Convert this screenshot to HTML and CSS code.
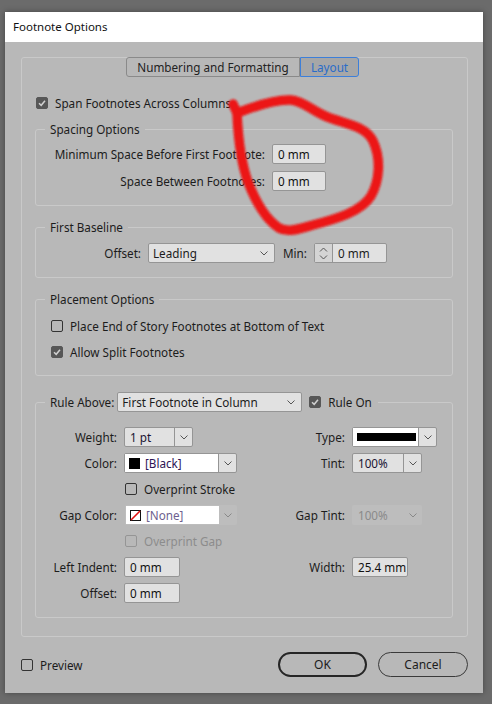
FILE: index.html
```html
<!DOCTYPE html>
<html lang="en">
<head>
    <meta charset="UTF-8">
    <meta name="viewport" content="width=device-width, initial-scale=1.0">
    <title>Footnote Options</title>
    <link rel="stylesheet" href="styles.css">
</head>
<body>
    <div class="dialog">
        <div class="titlebar">Footnote Options</div>

        <div class="panel">
            <div class="tabs">
                <div class="tab">Numbering and Formatting</div>
                <div class="tab active">Layout</div>
            </div>

            <div class="check-row span-row">
                <span class="cb checked"><svg width="10" height="10" viewBox="0 0 10 10"><path d="M2 5.2 L4.2 7.3 L8 2.8" fill="none" stroke="#d0d0d0" stroke-width="1.5"/></svg></span>
                <span>Span Footnotes Across Columns</span>
            </div>

            <fieldset class="group">
                <legend>Spacing Options</legend>
                <div class="spacing-grid">
                    <span class="lbl">Minimum Space Before First Footnote:</span>
                    <span class="field">0 mm</span>
                    <span class="lbl">Space Between Footnotes:</span>
                    <span class="field">0 mm</span>
                </div>
            </fieldset>

            <fieldset class="group gap-top">
                <legend>First Baseline</legend>
                <div class="baseline-row">
                    <span class="lbl offset-lbl">Offset:</span>
                    <span class="select leading">
                        <span class="select-value">Leading</span>
                        <svg class="chev" width="8" height="5" viewBox="0 0 8 5"><path d="M0.5 0.5 L4 4 L7.5 0.5" fill="none" stroke="#555" stroke-width="1"/></svg>
                    </span>
                    <span class="lbl">Min:</span>
                    <span class="spinner">
                        <span class="spin-btns">
                            <svg width="9" height="15" viewBox="0 0 9 15"><path d="M1 5.5 L4.5 2 L8 5.5 M1 9.5 L4.5 13 L8 9.5" fill="none" stroke="#555" stroke-width="1"/></svg>
                        </span>
                        <span class="spin-value">0 mm</span>
                    </span>
                </div>
            </fieldset>

            <fieldset class="group gap-top">
                <legend>Placement Options</legend>
                <div class="placement">
                    <div class="check-row">
                        <span class="cb"></span>
                        <span>Place End of Story Footnotes at Bottom of Text</span>
                    </div>
                    <div class="check-row">
                        <span class="cb checked"><svg width="10" height="10" viewBox="0 0 10 10"><path d="M2 5.2 L4.2 7.3 L8 2.8" fill="none" stroke="#d0d0d0" stroke-width="1.5"/></svg></span>
                        <span>Allow Split Footnotes</span>
                    </div>
                </div>
            </fieldset>

            <fieldset class="group rule-group">
                <legend>
                    <span class="rule-legend">
                        <span>Rule Above:</span>
                        <span class="select rule-select">
                            <span class="select-value">First Footnote in Column</span>
                            <svg class="chev" width="8" height="5" viewBox="0 0 8 5"><path d="M0.5 0.5 L4 4 L7.5 0.5" fill="none" stroke="#555" stroke-width="1"/></svg>
                        </span>
                        <span class="cb checked"><svg width="10" height="10" viewBox="0 0 10 10"><path d="M2 5.2 L4.2 7.3 L8 2.8" fill="none" stroke="#d0d0d0" stroke-width="1.5"/></svg></span>
                        <span>Rule On</span>
                    </span>
                </legend>

                <div class="rule-grid">
                    <span class="lbl">Weight:</span>
                    <span class="dd weight">
                        <span class="dd-value">1 pt</span>
                        <span class="dd-arrow"><svg width="8" height="5" viewBox="0 0 8 5"><path d="M0.5 0.5 L4 4 L7.5 0.5" fill="none" stroke="#555" stroke-width="1"/></svg></span>
                    </span>
                    <span class="lbl">Type:</span>
                    <span class="dd type">
                        <span class="dd-value white"><span class="line-sample"></span></span>
                        <span class="dd-arrow"><svg width="8" height="5" viewBox="0 0 8 5"><path d="M0.5 0.5 L4 4 L7.5 0.5" fill="none" stroke="#555" stroke-width="1"/></svg></span>
                    </span>

                    <span class="lbl">Color:</span>
                    <span class="dd color">
                        <span class="dd-value white"><span class="swatch black"></span><span class="swatch-name">[Black]</span></span>
                        <span class="dd-arrow"><svg width="8" height="5" viewBox="0 0 8 5"><path d="M0.5 0.5 L4 4 L7.5 0.5" fill="none" stroke="#555" stroke-width="1"/></svg></span>
                    </span>
                    <span class="lbl">Tint:</span>
                    <span class="dd tint">
                        <span class="dd-value">100%</span>
                        <span class="dd-arrow"><svg width="8" height="5" viewBox="0 0 8 5"><path d="M0.5 0.5 L4 4 L7.5 0.5" fill="none" stroke="#555" stroke-width="1"/></svg></span>
                    </span>

                    <span></span>
                    <div class="check-row span-cols">
                        <span class="cb"></span>
                        <span>Overprint Stroke</span>
                    </div>

                    <span class="lbl">Gap Color:</span>
                    <span class="dd color disabled">
                        <span class="dd-value white">
                            <svg class="swatch-none" width="11" height="11" viewBox="0 0 11 11"><rect x="0.5" y="0.5" width="10" height="10" fill="#fff" stroke="#111"/><path d="M1 10 L10 1" stroke="#e01010" stroke-width="1.6"/></svg>
                            <span class="swatch-name none">[None]</span>
                        </span>
                        <span class="dd-arrow"><svg width="8" height="5" viewBox="0 0 8 5"><path d="M0.5 0.5 L4 4 L7.5 0.5" fill="none" stroke="#888" stroke-width="1"/></svg></span>
                    </span>
                    <span class="lbl">Gap Tint:</span>
                    <span class="dd tint disabled">
                        <span class="dd-value">100%</span>
                        <span class="dd-arrow"><svg width="8" height="5" viewBox="0 0 8 5"><path d="M0.5 0.5 L4 4 L7.5 0.5" fill="none" stroke="#888" stroke-width="1"/></svg></span>
                    </span>

                    <span></span>
                    <div class="check-row span-cols muted">
                        <span class="cb"></span>
                        <span>Overprint Gap</span>
                    </div>

                    <span class="lbl">Left Indent:</span>
                    <span class="field small">0 mm</span>
                    <span class="lbl">Width:</span>
                    <span class="field small">25.4 mm</span>

                    <span class="lbl">Offset:</span>
                    <span class="field small">0 mm</span>
                </div>
            </fieldset>
        </div>

        <div class="footer">
            <div class="check-row">
                <span class="cb"></span>
                <span>Preview</span>
            </div>
            <div class="buttons">
                <button class="btn primary">OK</button>
                <button class="btn">Cancel</button>
            </div>
        </div>
    </div>

    <!-- red marker scribble drawn over the dialog -->
    <svg class="scribble" width="492" height="704" viewBox="0 0 492 704">
        <defs>
            <filter id="soft"><feGaussianBlur stdDeviation="0.9"/></filter>
        </defs>
        <path d="M233,104 L237,113 C255,106 275,99 291,100 C304,101 313,112 330,118 C350,125 366,127 373,141 C381,158 380,180 371,196 C361,212 336,219 313,225 C299,229 288,233 279,228 C265,219 255,200 248,182 C240,160 238,136 237,113"
              fill="none" stroke="#ec1212" stroke-width="9.5" stroke-linecap="round" stroke-linejoin="round" filter="url(#soft)"/>
    </svg>
</body>
</html>
```

FILE: styles.css
```css
body {
    font-family: "Noto Sans", "Open Sans", sans-serif;
    font-size: 11.7px;
    color: #1c1c1c;
    background-color: #6b6b6b;
    margin: 0;
    padding: 12px 0 0 5px;
    height: 704px;
    box-sizing: border-box;
    overflow: hidden;
}

.dialog {
    width: 478px;
    background-color: #b8b8b8;
    box-shadow: 0 0 6px rgba(0, 0, 0, 0.35);
}

.titlebar {
    height: 30px;
    line-height: 30px;
    background-color: #ffffff;
    padding-left: 8px;
    font-size: 11.5px;
    color: #111;
}

.panel {
    margin: 15px 15px 0 16px;
    border: 1px solid #c9c9c9;
    border-radius: 3px;
    padding: 0 14px 18px 13px;
}

.tabs {
    display: flex;
    justify-content: center;
    margin-top: -1px;
    margin-right: 3px;
}

.tab {
    height: 18px;
    line-height: 18px;
    border: 1px solid #8a8a8a;
    background-color: #b8b8b8;
    color: #222;
    text-align: center;
}

.tab:first-child {
    border-radius: 3px 0 0 3px;
    width: 172px;
}

.tab.active {
    border-color: #3d7fd9;
    background-color: #a7a7a7;
    color: #2a6cc9;
    border-radius: 0 3px 3px 0;
    width: 57px;
}

.check-row {
    display: flex;
    align-items: center;
    gap: 7px;
    height: 20px;
}

.span-row {
    margin-top: 16px;
    padding-left: 1px;
}

.cb {
    width: 12px;
    height: 12px;
    box-sizing: border-box;
    border: 1px solid #333;
    border-radius: 2px;
    display: inline-flex;
    align-items: center;
    justify-content: center;
    flex-shrink: 0;
}

.cb.checked {
    background-color: #575757;
    border-color: #575757;
}

.muted {
    color: #8c8c8c;
}

.muted .cb {
    border-color: #959595;
}

/* group boxes */
.group {
    margin: 8px 0 0 0;
    padding: 0;
    border: 1px solid #c9c9c9;
    border-radius: 3px;
    min-width: 0;
}

.group legend {
    margin-left: 9px;
    padding: 0 5px;
    line-height: 16px;
}

.gap-top {
    margin-top: 13px;
}

.lbl {
    text-align: right;
    white-space: nowrap;
}

.field {
    height: 20px;
    box-sizing: border-box;
    line-height: 18px;
    padding-left: 5px;
    background-color: #e1e1e1;
    border: 1px solid #959595;
    border-radius: 2px;
    color: #111;
    white-space: nowrap;
    overflow: hidden;
}

.spacing-grid {
    display: grid;
    grid-template-columns: 229px 54px;
    grid-auto-rows: 20px;
    column-gap: 7px;
    row-gap: 7px;
    align-items: center;
    padding: 7px 0 14px;
}

.baseline-row {
    display: flex;
    align-items: center;
    height: 20px;
    padding: 8px 0 14px;
}

.offset-lbl {
    width: 105px;
    margin-right: 7px;
}

.select {
    display: flex;
    align-items: center;
    height: 20px;
    box-sizing: border-box;
    background-color: #e1e1e1;
    border: 1px solid #959595;
    border-radius: 2px;
    padding: 0 6px 0 4px;
}

.select-value {
    flex: 1;
    white-space: nowrap;
}

.leading {
    width: 127px;
    margin-right: 8px;
}

.spinner {
    display: flex;
    width: 73px;
    height: 20px;
    margin-left: 7px;
    box-sizing: border-box;
    background-color: #e1e1e1;
    border: 1px solid #959595;
    border-radius: 2px;
}

.spin-btns {
    width: 17px;
    border-right: 1px solid #959595;
    display: flex;
    align-items: center;
    justify-content: center;
    background-color: #d4d4d4;
}

.spin-value {
    padding-left: 5px;
    line-height: 18px;
}

.placement {
    display: flex;
    flex-direction: column;
    gap: 6px;
    padding: 9px 0 13px 15px;
}

/* rule above */
.rule-group {
    margin-top: 16px;
}

.rule-group legend {
    line-height: 20px;
    padding-right: 6px;
}

.rule-legend {
    display: flex;
    align-items: center;
}

.rule-select {
    width: 185px;
    margin: 0 7px 0 3px;
}

.rule-legend .cb {
    margin-right: 7px;
}

.rule-grid {
    display: grid;
    grid-template-columns: 81px 139px 75px 1fr;
    grid-auto-rows: 20px;
    column-gap: 7px;
    row-gap: 6px;
    align-items: center;
    padding: 15px 0 14px;
}

.span-cols {
    grid-column: 2 / -1;
    margin-left: 1px;
}

.dd {
    display: flex;
    height: 20px;
    box-sizing: border-box;
    border: 1px solid #959595;
    border-radius: 2px;
    background-color: #e1e1e1;
}

.dd-value {
    flex: 1;
    display: flex;
    align-items: center;
    padding-left: 5px;
    white-space: nowrap;
    color: #1a1433;
}

.dd-value.white {
    background-color: #ffffff;
    padding-left: 4px;
}

.dd-arrow {
    width: 17px;
    border-left: 1px solid #959595;
    display: flex;
    align-items: center;
    justify-content: center;
}

.weight {
    width: 69px;
}

.type {
    width: 85px;
}

.color {
    width: 113px;
}

.tint {
    width: 70px;
}

.line-sample {
    width: 59px;
    height: 8px;
    background-color: #000;
}

.swatch {
    width: 11px;
    height: 11px;
    box-sizing: border-box;
    margin-right: 5px;
}

.swatch.black {
    background-color: #000;
}

.swatch-none {
    margin-right: 5px;
}

.swatch-name {
    color: #2e1454;
}

.swatch-name.none {
    color: #6e5f8e;
}

.dd.disabled {
    border-color: transparent;
    background-color: #bdbdbd;
}

.dd.disabled .dd-arrow {
    border-left: none;
}

.dd.disabled .dd-value {
    color: #8a8a8a;
}

.dd.color.disabled {
    margin-left: 1px;
    width: 112px;
}

.field.small {
    width: 56px;
}

/* footer */
.footer {
    display: flex;
    align-items: center;
    justify-content: space-between;
    margin-top: 15px;
    padding: 0 15px 16px 16px;
}

.buttons {
    display: flex;
    gap: 11px;
}

.btn {
    font-family: inherit;
    font-size: 12px;
    width: 90px;
    height: 25px;
    border: 1px solid #3a3a3a;
    border-radius: 13px;
    background-color: #b8b8b8;
    color: #1c1c1c;
    padding: 0;
    cursor: pointer;
}

.btn.primary {
    width: 89px;
    border: 2px solid #262626;
}

.scribble {
    position: absolute;
    top: 0;
    left: 0;
    pointer-events: none;
}
```
